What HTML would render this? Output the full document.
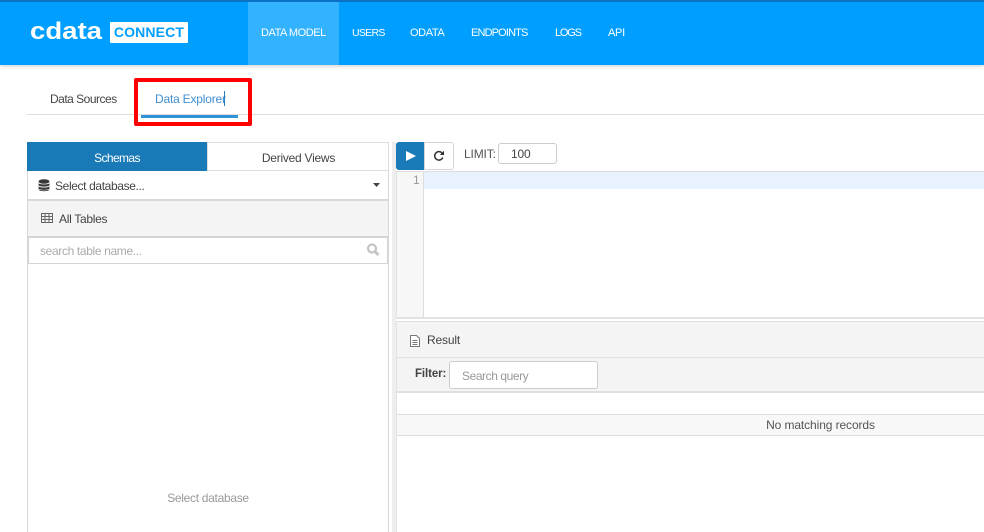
<!DOCTYPE html>
<html><head><meta charset="utf-8"><style>
html,body{margin:0;padding:0;background:#fff}
#p{position:relative;width:984px;height:532px;overflow:hidden;background:#fff;font-family:"Liberation Sans",sans-serif;font-size:12px;color:#444}
#p div,#p svg{position:absolute}
.t{white-space:nowrap;line-height:16px}
.nav{color:#fff;top:25px;font-size:11px}
</style></head><body><div id="p">
<div style="left:0;top:0;width:984px;height:65px;background:#009fff;box-shadow:0 1px 4px rgba(0,0,0,.2)"></div>
<div style="left:0;top:0;width:984px;height:2px;background:#0b72c4"></div>
<div style="left:248px;top:2px;width:91px;height:63px;background:#33b2ff"></div>
<svg style="left:28px;top:18px" width="80" height="28"><text x="2" y="21" font-family="Liberation Sans" font-weight="bold" font-size="24" fill="#fff" textLength="72" lengthAdjust="spacingAndGlyphs">cdata</text></svg>
<div class="t" style="left:110px;top:22px;width:78px;height:21px;background:#fff;border-radius:1px;color:#009fff;font-weight:bold;font-size:14px;line-height:21px;text-align:center;letter-spacing:.15px">CONNECT</div>
<div class="t nav" style="left:261px;letter-spacing:-.45px">DATA MODEL</div>
<div class="t nav" style="left:352px;font-size:10.500px;letter-spacing:-.7px">USERS</div>
<div class="t nav" style="left:410px;letter-spacing:-.4px">ODATA</div>
<div class="t nav" style="left:471px;letter-spacing:-.85px">ENDPOINTS</div>
<div class="t nav" style="left:555px;letter-spacing:-1.200px">LOGS</div>
<div class="t nav" style="left:608px;letter-spacing:-.3px">API</div>

<div style="left:27px;top:114px;width:957px;height:1px;background:#ddd"></div>
<div class="t" style="left:50px;top:91px;letter-spacing:-.5px;color:#444">Data Sources</div>
<div class="t" style="left:155px;top:91px;letter-spacing:-.2px;color:#3f8fd2">Data Explorer</div>
<div style="left:224px;top:91px;width:1px;height:15px;background:#2b7fc0"></div>
<div style="left:141px;top:115px;width:97px;height:3px;background:#2f93d6"></div>
<div style="left:134px;top:78px;width:110px;height:40px;border:4px solid #f00;border-radius:2px"></div>

<!-- left panel -->
<div style="left:27px;top:142px;width:180px;height:29px;background:#1a7ab8"></div>
<div class="t" style="left:27px;top:150px;width:180px;text-align:center;color:#fff;letter-spacing:-.6px">Schemas</div>
<div style="left:207px;top:142px;box-sizing:border-box;height:29px;width:182px;border:1px solid #ddd"></div>
<div class="t" style="left:208px;top:150px;width:181px;text-align:center;color:#444;letter-spacing:-.25px">Derived Views</div>
<div style="left:27px;top:171px;width:362px;height:370px;box-sizing:border-box;border:1px solid #d8d8d8;border-top:0"></div>
<div style="left:28px;top:199px;width:360px;height:2px;background:#d8d8d8"></div>
<svg style="left:38px;top:179px" width="12" height="13" viewBox="0 0 12 13"><g fill="#3a3a3a"><ellipse cx="6" cy="2.500" rx="5.500" ry="2.300"/><path d="M.5 4.200c1.500 1.600 9.500 1.600 11 0V6.300c-1.500 1.800-9.500 1.800-11 0zM.5 7.400c1.500 1.600 9.500 1.600 11 0V9.500c-1.500 1.800-9.500 1.800-11 0zM.5 10.400c1.500 1.200 9.500 1.200 11 0v.4c-1.500 1.900-9.500 1.900-11 0z"/></g></svg>
<div class="t" style="left:55px;top:178px;letter-spacing:-.37px;color:#444">Select database...</div>
<svg style="left:373px;top:183px" width="7" height="4"><path d="M0 0H7L3.500 4z" fill="#444"/></svg>
<div style="left:28px;top:201px;width:360px;height:35px;background:#f4f4f4"></div>
<svg style="left:41px;top:213px" width="12" height="10" viewBox="0 0 12 10"><rect x=".5" y=".5" width="11" height="9" fill="none" stroke="#666"/><path d="M.5 3.500H11.500M.5 6.500H11.500M4 .5V9.500M8 .5V9.500" stroke="#666" fill="none"/></svg>
<div class="t" style="left:59px;top:211px;letter-spacing:-.3px;color:#444">All Tables</div>
<div style="left:28px;top:236px;width:360px;height:28px;box-sizing:border-box;border:1px solid #d4d4d4;border-top:2px solid #d4d4d4;background:#fff"></div>
<div class="t" style="left:40px;top:243px;color:#aaa;letter-spacing:-.35px">search table name...</div>
<svg style="left:366px;top:243px" width="14" height="14" viewBox="0 0 14 14"><circle cx="6" cy="5.500" r="4" fill="none" stroke="#c4c4c4" stroke-width="2.200"/><path d="M9 8.500L12.500 12" stroke="#c4c4c4" stroke-width="3"/></svg>
<div class="t" style="left:28px;top:490px;width:360px;text-align:center;color:#999;letter-spacing:-.3px">Select database</div>

<!-- right -->
<div style="left:392px;top:142px;width:4px;height:390px;background:#eee"></div>
<div style="left:396px;top:142px;width:29px;height:28px;background:#1a7ab8;border-radius:3px 0 0 3px"></div>
<svg style="left:406px;top:151px" width="10" height="10"><path d="M0 0L10 5L0 10z" fill="#fff"/></svg>
<div style="left:424px;top:142px;width:30px;height:28px;box-sizing:border-box;border:1px solid #d5d5d5;border-radius:0 3px 3px 0;background:#fff"></div>
<svg style="left:433px;top:150px" width="12" height="12" viewBox="0 0 12 12"><path d="M9.800 7.500A4.200 4.200 0 1 1 9 3" fill="none" stroke="#333" stroke-width="1.500"/><path d="M11 .8V5H6.800z" fill="#333"/></svg>
<div class="t" style="left:464px;top:146px;color:#555;letter-spacing:-.15px">LIMIT:</div>
<div style="left:498px;top:143px;width:59px;height:21px;box-sizing:border-box;border:1px solid #ccc;border-radius:3px;background:#fff"></div>
<div class="t" style="left:511px;top:146px;color:#444;letter-spacing:-.2px">100</div>

<div style="left:396px;top:171px;width:588px;height:148px;box-sizing:border-box;border-top:1px solid #ddd;border-bottom:2px solid #e2e2e2;border-left:1px solid #e2e2e2"></div>
<div style="left:397px;top:172px;width:26px;height:145px;background:#f7f7f7;border-right:1px solid #ddd"></div>
<div class="t" style="left:413px;top:172px;color:#999">1</div>
<div style="left:424px;top:172px;width:560px;height:17px;background:#e8f2ff"></div>

<div style="left:396px;top:321px;width:588px;height:37px;background:#f4f4f4;border-top:1px solid #ddd;border-bottom:1px solid #e2e2e2;border-left:1px solid #e2e2e2;box-sizing:border-box"></div>
<svg style="left:410px;top:334px" width="10" height="13" viewBox="0 0 10 13"><path d="M.5 1.500H6.500L9.500 4.500V12.500H.5z" fill="#fff" stroke="#777"/><path d="M2.500 6.500H7.500M2.500 8.500H7.500M2.500 10.500H7.500" stroke="#777"/></svg>
<div class="t" style="left:427px;top:332px;color:#444;letter-spacing:-.15px">Result</div>
<div style="left:396px;top:358px;width:588px;height:33px;background:#f4f4f4;border-left:1px solid #e2e2e2;box-sizing:border-box"></div>
<div class="t" style="left:415px;top:366px;color:#444;font-weight:bold;font-size:11.500px;letter-spacing:-.1px">Filter:</div>
<div style="left:449px;top:361px;width:149px;height:28px;box-sizing:border-box;border:1px solid #ccc;border-radius:3px;background:#fff"></div>
<div class="t" style="left:462px;top:368px;color:#999;letter-spacing:-.43px">Search query</div>
<div style="left:396px;top:391px;width:588px;height:2px;background:#e0e0e0"></div>
<div style="left:396px;top:393px;width:1px;height:139px;background:#e2e2e2"></div>
<div style="left:397px;top:414px;width:587px;height:22px;box-sizing:border-box;background:#f8f8f8;border-top:1px solid #ddd;border-bottom:1px solid #ddd"></div>
<div class="t" style="left:657px;top:417px;width:327px;text-align:center;color:#555;letter-spacing:-.1px">No matching records</div>
</div></body></html>
